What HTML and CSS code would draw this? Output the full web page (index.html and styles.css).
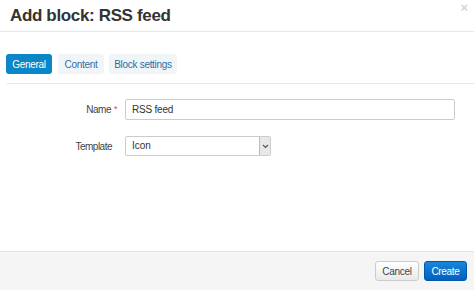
FILE: index.html
```html
<!DOCTYPE html>
<html lang="en">
<head>
    <meta charset="UTF-8">
    <title>Add block: RSS feed</title>
    <link rel="stylesheet" href="styles.css">
</head>
<body>
    <div class="dialog">
        <div class="dialog-header">
            <h1>Add block: RSS feed</h1>
            <span class="close">&times;</span>
        </div>

        <div class="dialog-body">
            <!-- Onglets -->
            <div class="tabs">
                <button class="tab tab-general active">General</button>
                <button class="tab tab-content">Content</button>
                <button class="tab tab-settings">Block settings</button>
            </div>

            <div class="form-row">
                <label class="form-label">Name<span class="req">*</span></label>
                <input type="text" class="form-input" value="RSS feed">
            </div>
            <div class="form-row">
                <label class="form-label plain">Template</label>
                <div class="select">
                    <span class="select-value">Icon</span>
                    <span class="select-arrow">
                        <svg width="7" height="5" viewBox="0 0 7 5"><path d="M1 1 L3.5 3.5 L6 1" fill="none" stroke="#555" stroke-width="1.2"/></svg>
                    </span>
                </div>
            </div>
        </div>

        <div class="dialog-footer">
            <button class="btn btn-cancel">Cancel</button>
            <button class="btn btn-create">Create</button>
        </div>
    </div>
</body>
</html>
```

FILE: styles.css
```css
/* Style général */
body {
    margin: 0;
    font-family: 'Liberation Sans', Arial, sans-serif;
    background: #fff;
    color: #333;
}

.dialog {
    width: 474px;
    height: 290px;
    display: flex;
    flex-direction: column;
}

/* En-tête */
.dialog-header {
    height: 32px;
    box-sizing: border-box;
    border-bottom: 1px solid #e8e8e8;
    display: flex;
    justify-content: space-between;
    padding: 0 6px 0 10px;
}
.dialog-header h1 {
    margin: 0;
    font-size: 17px;
    letter-spacing: -0.35px;
    line-height: 31px;
    font-weight: bold;
    color: #333;
}
.close {
    color: #d4d4d4;
    font-size: 13px;
    line-height: 16px;
    font-weight: bold;
}

/* Corps */
.dialog-body {
    flex: 1;
    padding: 22px 0 0 7px;
}
.tabs {
    display: flex;
    padding-bottom: 9px;
    border-bottom: 1px solid #e6e6e6;
    margin-bottom: 15px;
}
.tab {
    font-family: inherit;
    font-size: 10px;
    letter-spacing: -0.3px;
    height: 20px;
    padding: 0;
    border: none;
    border-radius: 3px;
    background: #f2f5f8;
    color: #2a6fa8;
}
.tab-general { width: 46px; margin-left: -1px; }
.tab-content { width: 46px; margin-left: 6px; }
.tab-settings { width: 68px; margin-left: 5px; }
.tab.active {
    background: #0a86c9;
    color: #fff;
}

.form-row {
    display: flex;
    align-items: center;
    margin-bottom: 16px;
}
.form-label {
    width: 111px;
    box-sizing: border-box;
    text-align: right;
    font-size: 10px;
    letter-spacing: -0.5px;
    color: #444;
    margin-right: 7px;
    padding-right: 1px;
}
.form-label.plain {
    padding-right: 6px;
}
.req {
    color: #e2463a;
    font-size: 9px;
    margin-left: 3px;
    vertical-align: top;
}
.form-input {
    width: 330px;
    height: 21px;
    box-sizing: border-box;
    border: 1px solid #ccc;
    border-radius: 2px;
    padding: 0 6px;
    font-family: inherit;
    font-size: 10px;
    letter-spacing: -0.2px;
    color: #333;
}

.select {
    width: 146px;
    height: 20px;
    box-sizing: border-box;
    border: 1px solid #ccc;
    border-radius: 2px;
    display: flex;
    justify-content: space-between;
    align-items: stretch;
}
.select-value {
    font-size: 10px;
    line-height: 18px;
    padding-left: 6px;
}
.select-arrow {
    width: 10px;
    background: #e8e8e8;
    border-left: 1px solid #bbb;
    display: flex;
    align-items: center;
    justify-content: center;
}

/* Pied */
.dialog-footer {
    height: 38px;
    background: #f5f5f5;
    border-top: 1px solid #e5e5e5;
    display: flex;
    justify-content: flex-end;
    align-items: center;
    gap: 5px;
    padding-right: 7px;
}
.btn {
    font-family: inherit;
    font-size: 10px;
    letter-spacing: -0.3px;
    height: 20px;
    padding: 0;
    border-radius: 3px;
}
.btn-cancel {
    background: linear-gradient(#fff, #eaeaea);
    border: 1px solid #ccc;
    color: #444;
    width: 44px;
}
.btn-create {
    background: linear-gradient(#1a86d8, #0061c0);
    border: 1px solid #0058ad;
    color: #fff;
    width: 43px;
}
```
